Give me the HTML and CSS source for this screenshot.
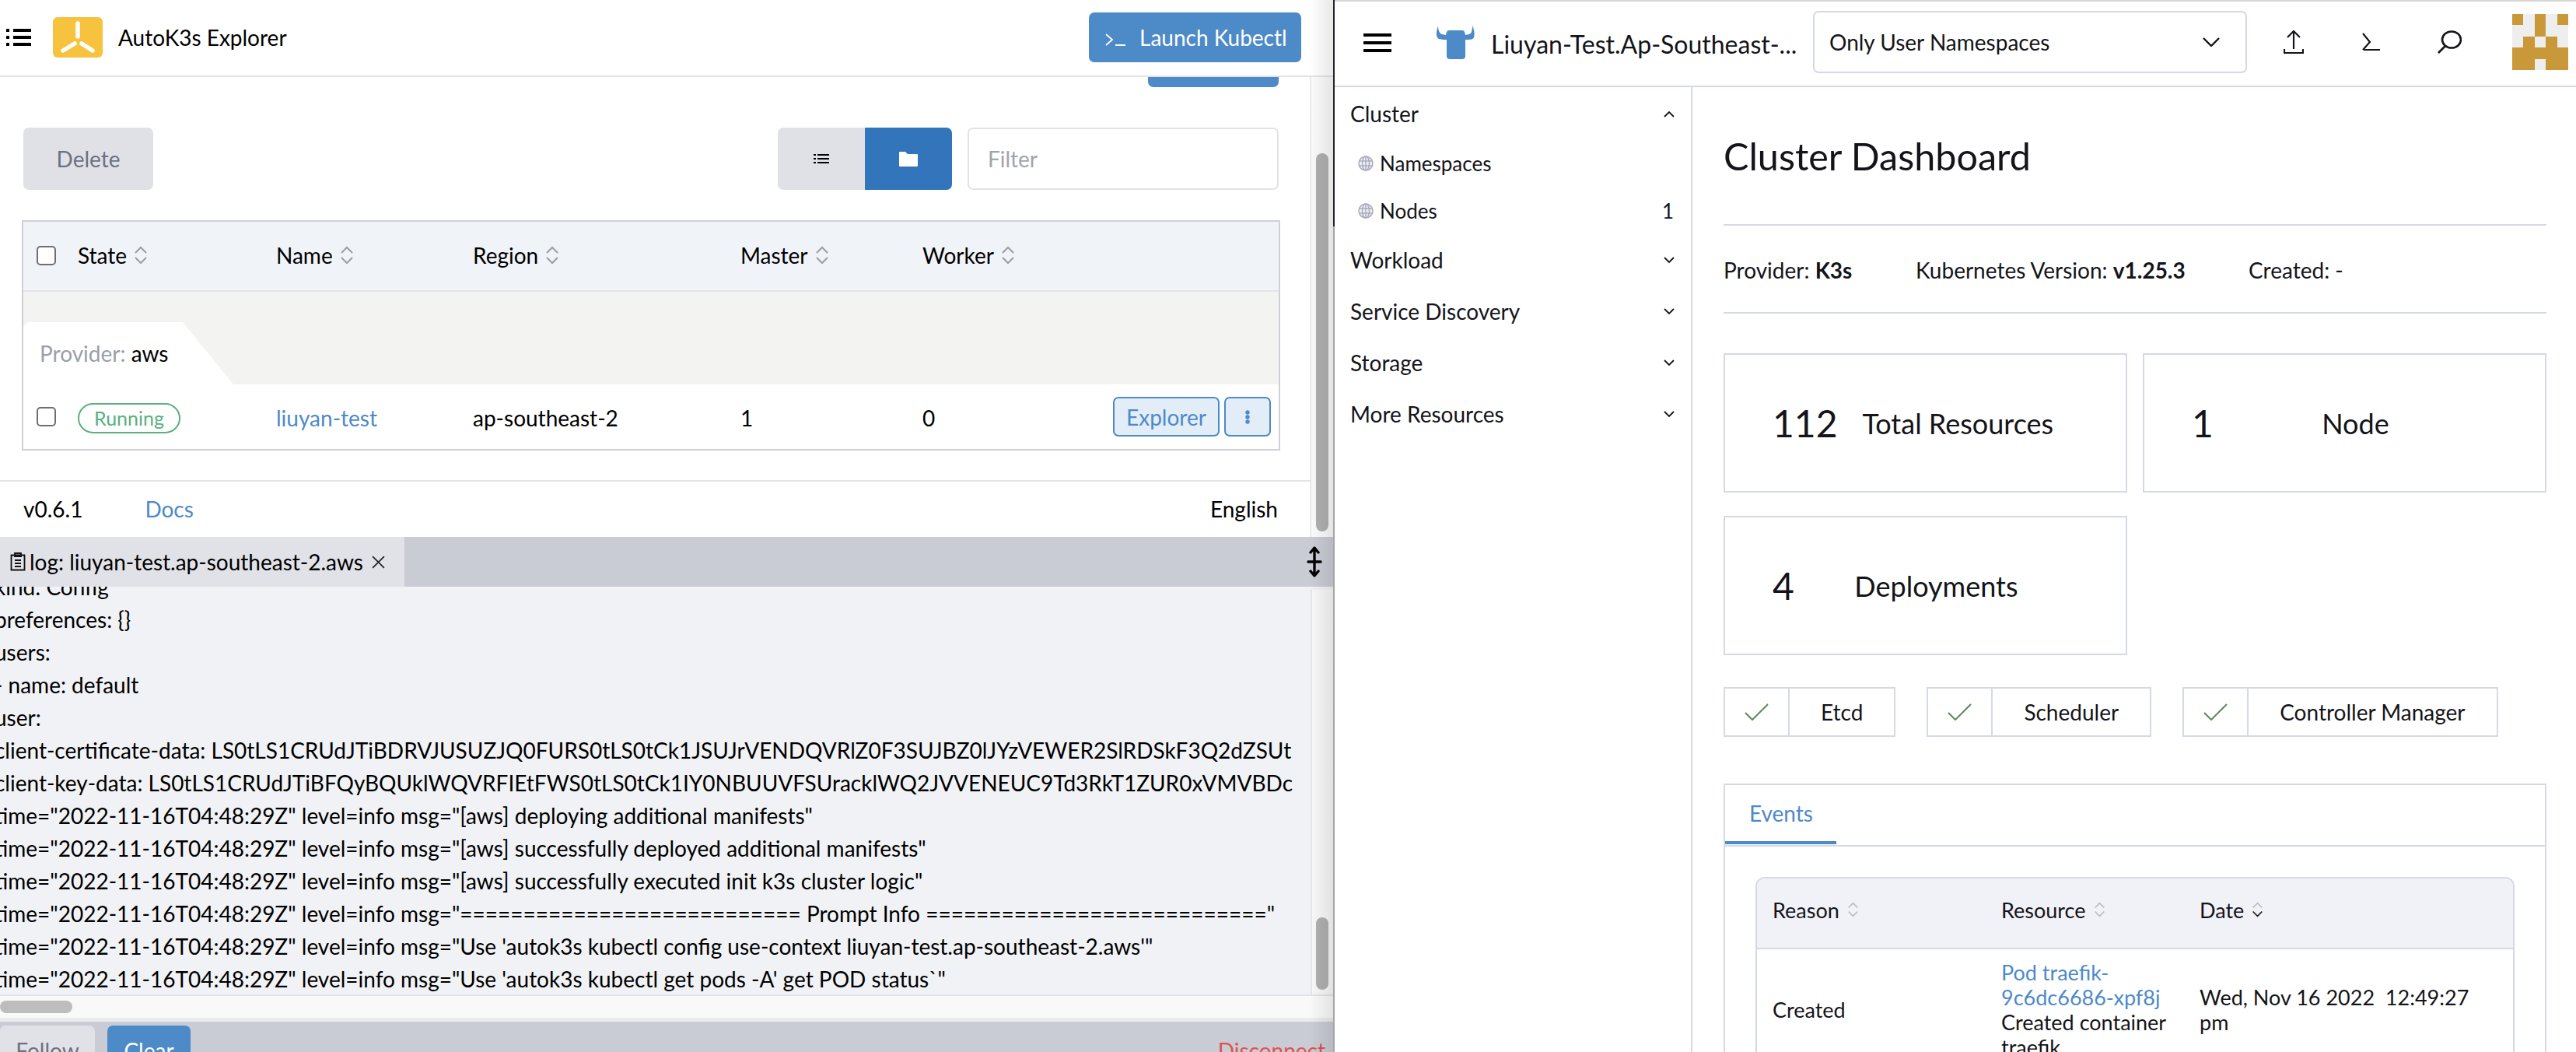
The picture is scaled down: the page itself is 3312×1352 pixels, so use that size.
FILE: index.html
```html
<!DOCTYPE html>
<html lang="en">
<head>
<meta charset="utf-8">
<title>AutoK3s Explorer</title>
<link rel="stylesheet" href="styles.css">
</head>
<body>
<div class="screen">
  <section class="left">
    <header class="app-head">
      <svg class="menu-ico" viewBox="0 0 32 24"><path d="M0 1h4v4H0zM9 1h23v4H9zM0 10h4v4H0zM9 10h23v4H9zM0 19h4v4H0zM9 19h23v4H9z"/></svg>
      <svg class="logo" viewBox="0 0 64 52"><rect width="64" height="52" rx="6" fill="#f7c33f"/><g stroke="#fff" stroke-width="5.5" stroke-linecap="round"><path d="M32 8v17"/><path d="M28 34 13 43"/><path d="M37 34l14 9"/></g></svg>
      <span class="app-title">AutoK3s Explorer</span>
      <button class="launch"><svg viewBox="0 0 26 16"><path d="M1 1l8 7-8 7M13 15h13" fill="none" stroke="#fff" stroke-width="1.8"/></svg>Launch Kubectl</button>
    </header>
    <div class="app-body">
      <div class="app-main">
        <div class="peek"></div>
        <div class="toolbar">
          <button class="btn-delete">Delete</button>
          <div class="toggle">
            <span class="toggle-off"><svg viewBox="0 0 20 14"><path d="M0 1h3v2H0zM5 1h15v2H5zM0 6h3v2H0zM5 6h15v2H5zM0 11h3v2H0zM5 11h15v2H5z"/></svg></span>
            <span class="toggle-on"><svg viewBox="0 0 24 19"><path d="M1 0h7l3 3h12a1 1 0 0 1 1 1v14a1 1 0 0 1-1 1H1a1 1 0 0 1-1-1V1a1 1 0 0 1 1-1z" fill="#fff"/></svg></span>
          </div>
          <div class="filter">Filter</div>
        </div>
        <div class="table">
          <div class="t-row t-head">
            <span class="check"></span>
            <span>State<svg class="sort" viewBox="0 0 18 24"><path d="M2 9l7-7 7 7M2 15l7 7 7-7"/></svg></span>
            <span>Name<svg class="sort" viewBox="0 0 18 24"><path d="M2 9l7-7 7 7M2 15l7 7 7-7"/></svg></span>
            <span>Region<svg class="sort" viewBox="0 0 18 24"><path d="M2 9l7-7 7 7M2 15l7 7 7-7"/></svg></span>
            <span>Master<svg class="sort" viewBox="0 0 18 24"><path d="M2 9l7-7 7 7M2 15l7 7 7-7"/></svg></span>
            <span>Worker<svg class="sort" viewBox="0 0 18 24"><path d="M2 9l7-7 7 7M2 15l7 7 7-7"/></svg></span>
          </div>
          <div class="t-group"><div class="group-tab"><span class="muted">Provider:</span> aws</div></div>
          <div class="t-row t-body">
            <span class="check"></span>
            <span><span class="badge">Running</span></span>
            <a class="link">liuyan-test</a>
            <span>ap-southeast-2</span>
            <span>1</span>
            <span class="worker-cell">0
              <span class="actions"><button class="btn-explorer">Explorer</button><button class="btn-kebab"><svg viewBox="0 0 6 18"><circle cx="3" cy="3" r="2.7"/><circle cx="3" cy="9" r="2.7"/><circle cx="3" cy="15" r="2.7"/></svg></button></span>
            </span>
          </div>
        </div>
        <footer class="app-foot"><span>v0.6.1</span><a class="link docs">Docs</a><span class="lang">English</span></footer>
      </div>
      <div class="v-track"><div class="v-thumb main-thumb"></div></div>
    </div>
    <div class="log-bar">
      <div class="log-tab">
        <svg class="clip-ico" viewBox="0 0 20 24"><path d="M1.5 3.5h17v19h-17zM6 1h8v4H6zM6 10h8M6 14h8M6 18h8" fill="none" stroke="#111" stroke-width="1.8"/></svg>
        <span>log: liuyan-test.ap-southeast-2.aws</span>
        <svg class="close-ico" viewBox="0 0 16 16"><path d="M1 1l14 14M15 1 1 15" stroke="#222" stroke-width="1.6"/></svg>
      </div>
      <svg class="resize-ico" viewBox="0 0 20 40"><path d="M10 3v34M2 20h16M5 8l5-6 5 6M5 32l5 6 5-6" fill="none" stroke="#000" stroke-width="3.4" stroke-linecap="round" stroke-linejoin="round"/></svg>
    </div>
    <div class="log-area">
      <div class="log-text">
        <div>kind: Config</div>
        <div>preferences: {}</div>
        <div>users:</div>
        <div>- name: default</div>
        <div>user:</div>
        <div>client-certificate-data: LS0tLS1CRUdJTiBDRVJUSUZJQ0FURS0tLS0tCk1JSUJrVENDQVRlZ0F3SUJBZ0lJYzVEWER2SlRDSkF3Q2dZSUt</div>
        <div>client-key-data: LS0tLS1CRUdJTiBFQyBQUklWQVRFIEtFWS0tLS0tCk1IY0NBUUVFSUracklWQ2JVVENEUC9Td3RkT1ZUR0xVMVBDc</div>
        <div>time="2022-11-16T04:48:29Z" level=info msg="[aws] deploying additional manifests"</div>
        <div>time="2022-11-16T04:48:29Z" level=info msg="[aws] successfully deployed additional manifests"</div>
        <div>time="2022-11-16T04:48:29Z" level=info msg="[aws] successfully executed init k3s cluster logic"</div>
        <div>time="2022-11-16T04:48:29Z" level=info msg="=========================== Prompt Info ==========================="</div>
        <div>time="2022-11-16T04:48:29Z" level=info msg="Use 'autok3s kubectl config use-context liuyan-test.ap-southeast-2.aws'"</div>
        <div>time="2022-11-16T04:48:29Z" level=info msg="Use 'autok3s kubectl get pods -A' get POD status`"</div>
      </div>
      <div class="log-track"><div class="v-thumb log-thumb"></div></div>
    </div>
    <div class="h-track"><div class="h-thumb"></div></div>
    <div class="log-foot">
      <button class="btn-follow">Follow</button>
      <button class="btn-clear">Clear</button>
      <span class="disconnect">Disconnect</span>
    </div>
    <div class="edge-shade"></div>
  </section>

  <section class="right">
    <header class="dash-head">
      <svg class="burger" viewBox="0 0 36 24"><path d="M0 0h36v4H0zM0 10h36v4H0zM0 20h36v4H0z"/></svg>
      <svg class="bull" viewBox="0 0 50 43"><path d="M3 0C3 6 5 10 8 11l5 1 1-4q1-2 3-2h17q2 0 3 2l1 4 5-1c3-1 4-5 4-11 3 6 3 12 2 15-1 3-5 3-11 3v21q0 4-4 4H18q-4 0-4-4V18C8 18 3 18 2 15 0 12 1 6 3 0z" fill="#4d8ac8"/></svg>
      <span class="dash-title">Liuyan-Test.Ap-Southeast-...</span>
      <div class="ns-select"><span>Only User Namespaces</span><svg viewBox="0 0 22 12"><path d="M1 1l10 10L21 1" fill="none" stroke="#141419" stroke-width="2.4"/></svg></div>
      <svg class="top-ico upload" viewBox="0 0 26 30"><path d="M13 24V1M5 9l8-8 8 8M1 24v5h24v-5" fill="none" stroke="#141419" stroke-width="2.2"/></svg>
      <svg class="top-ico shell" viewBox="0 0 24 24"><path d="M1 1l9 11-9 10M2 22h21" fill="none" stroke="#141419" stroke-width="2.2"/></svg>
      <svg class="top-ico search" viewBox="0 0 32 30"><ellipse cx="19" cy="12" rx="12" ry="10.5" fill="none" stroke="#141419" stroke-width="2.6"/><path d="M11 20 2 29" stroke="#141419" stroke-width="2.6"/></svg>
      <div class="avatar">
        <i class="g"></i><i></i><i class="g"></i><i></i><i class="g"></i>
        <i></i><i></i><i class="g"></i><i></i><i></i>
        <i></i><i class="g"></i><i></i><i class="g"></i><i></i>
        <i class="g"></i><i class="g"></i><i class="g"></i><i class="g"></i><i class="g"></i>
        <i class="g"></i><i class="g"></i><i></i><i class="g"></i><i class="g"></i>
      </div>
    </header>
    <div class="dash-body">
      <nav class="side">
        <div class="side-group"><span>Cluster</span><svg viewBox="0 0 14 9"><path d="M1 8l6-6 6 6"/></svg></div>
        <div class="side-item"><svg class="globe" viewBox="0 0 20 20"><circle cx="10" cy="10" r="9"/><ellipse cx="10" cy="10" rx="4.5" ry="9"/><path d="M1 7h18M1 13h18M10 1v18"/></svg><span>Namespaces</span></div>
        <div class="side-item"><svg class="globe" viewBox="0 0 20 20"><circle cx="10" cy="10" r="9"/><ellipse cx="10" cy="10" rx="4.5" ry="9"/><path d="M1 7h18M1 13h18M10 1v18"/></svg><span>Nodes</span><span class="side-count">1</span></div>
        <div class="side-group"><span>Workload</span><svg viewBox="0 0 14 9"><path d="M1 1l6 6 6-6"/></svg></div>
        <div class="side-group"><span>Service Discovery</span><svg viewBox="0 0 14 9"><path d="M1 1l6 6 6-6"/></svg></div>
        <div class="side-group"><span>Storage</span><svg viewBox="0 0 14 9"><path d="M1 1l6 6 6-6"/></svg></div>
        <div class="side-group"><span>More Resources</span><svg viewBox="0 0 14 9"><path d="M1 1l6 6 6-6"/></svg></div>
      </nav>
      <main class="dash-main">
        <h1 class="dash-h1">Cluster Dashboard</h1>
        <div class="info"><span class="info-a">Provider: <b>K3s</b></span><span class="info-b">Kubernetes Version: <b>v1.25.3</b></span><span>Created: -</span></div>
        <div class="cards">
          <div class="card"><span class="card-n">112</span><span class="card-l">Total Resources</span></div>
          <div class="card"><span class="card-n">1</span><span class="card-l">Node</span></div>
          <div class="card"><span class="card-n">4</span><span class="card-l">Deployments</span></div>
        </div>
        <div class="statuses">
          <div class="status"><span class="status-ico"><svg viewBox="0 0 31 22"><path d="M1 12l9 9L30 1" fill="none" stroke="#5a8a5a" stroke-width="2"/></svg></span><span class="status-l">Etcd</span></div>
          <div class="status"><span class="status-ico"><svg viewBox="0 0 31 22"><path d="M1 12l9 9L30 1" fill="none" stroke="#5a8a5a" stroke-width="2"/></svg></span><span class="status-l">Scheduler</span></div>
          <div class="status"><span class="status-ico"><svg viewBox="0 0 31 22"><path d="M1 12l9 9L30 1" fill="none" stroke="#5a8a5a" stroke-width="2"/></svg></span><span class="status-l">Controller Manager</span></div>
        </div>
        <div class="tabs">
          <div class="tab-head"><span class="tab-active">Events</span></div>
          <div class="tab-body">
            <div class="ev-table">
              <div class="ev-row ev-head">
                <span>Reason<svg class="sort sm" viewBox="0 0 18 24"><path d="M2 9l7-7 7 7M2 15l7 7 7-7"/></svg></span>
                <span>Resource<svg class="sort sm" viewBox="0 0 18 24"><path d="M2 9l7-7 7 7M2 15l7 7 7-7"/></svg></span>
                <span>Date<svg class="sort sm" viewBox="0 0 18 24"><path d="M2 9l7-7 7 7"/><path class="sort-on" d="M2 15l7 7 7-7"/></svg></span>
              </div>
              <div class="ev-row ev-body">
                <span>Created</span>
                <span class="ev-res"><a class="link">Pod traefik-9c6dc6686-xpf8j</a><br>Created container traefik</span>
                <span class="ev-date">Wed, Nov 16 2022&nbsp; 12:49:27 pm</span>
              </div>
            </div>
          </div>
        </div>
      </main>
    </div>
  </section>
</div>
</body>
</html>
```

FILE: styles.css
```css
* { box-sizing: border-box; }
html, body { margin: 0; padding: 0; }
body { font-family: Lato, "Open Sans", sans-serif; font-size: 28px; color: #141419; background: #fff; overflow: hidden; }
button { font: inherit; border: 0; padding: 0; }
svg { display: block; flex: none; }
.screen { display: flex; width: 3312px; height: 1352px; overflow: hidden; }
.link { color: #4d8ac8; }
.muted { color: #9a9faa; }

/* left window */
.left { position: relative; width: 1716px; height: 1352px; flex: none; display: flex; flex-direction: column; border-right: 2px solid; border-image: linear-gradient(to bottom, #23242c 292px, #a6a6a6 292px) 1; overflow: hidden; }
.edge-shade { position: absolute; top: 0; right: 0; bottom: 0; width: 30px; background: linear-gradient(to right, rgba(0,0,0,0), rgba(0,0,0,.09)); pointer-events: none; }
.app-head { height: 97px; flex: none; display: flex; align-items: center; padding: 0 41px 0 8px; background: #fff; position: relative; }
.menu-ico { width: 32px; height: 24px; margin-right: 28px; margin-top: -2px; }
.logo { width: 64px; height: 52px; margin-right: 20px; margin-top: -1px; }
.app-title { color: #000; margin-top: -2px; }
.launch { margin-left: auto; margin-top: -2px; width: 273px; height: 64px; background: #4d8ac8; color: #fff; border-radius: 7px; display: flex; align-items: center; padding-left: 21px; gap: 18px; }
.launch svg { width: 26px; height: 16px; margin-top: 6px; }

.app-body { height: 593px; flex: none; display: flex; border-top: 2px solid #e2e3e8; }
.app-main { flex: 1; min-width: 0; display: flex; flex-direction: column; padding-left: 30px; border-right: 2px solid #e8e8ec; }
.peek { width: 168px; height: 13px; margin-left: 1446px; background: #4d8ac8; border-radius: 0 0 7px 7px; flex: none; }
.toolbar { display: flex; align-items: stretch; height: 80px; margin-top: 52px; flex: none; width: 1614px; }
.btn-delete { width: 167px; background: #e0e1e7; color: #6c7180; border-radius: 7px; }
.toggle { display: flex; margin-left: auto; border-radius: 7px; overflow: hidden; }
.toggle-off, .toggle-on { width: 112px; display: flex; align-items: center; justify-content: center; }
.toggle-off { background: #e0e1e7; }
.toggle-off svg { width: 20px; height: 14px; }
.toggle-on { background: #3275bb; }
.toggle-on svg { width: 24px; height: 19px; }
.filter { width: 400px; margin-left: 20px; border: 2px solid #e2e3e8; border-radius: 7px; color: #a0a4ad; display: flex; align-items: center; padding-left: 24px; background: #fff; }

.table { width: 1618px; margin: 39px 0 0 -2px; border: 2px solid #cfd0d5; flex: none; }
.t-row { display: grid; grid-template-columns: 70px 255px 253px 344px 234px 1fr; align-items: center; color: #000; }
.t-row > * { display: flex; align-items: center; }
.check { width: 25px; height: 25px; margin-left: 17px; border: 2px solid #6e6f76; border-radius: 5px; background: #fff; }
.t-head { height: 90px; padding-bottom: 2px; background: #f0f3f8; border-bottom: 2px solid #e2e4ea; }
.sort { width: 18px; height: 24px; margin-left: 9px; fill: none; stroke: #9b9da3; stroke-width: 2; }
.sort.sm { width: 15px; height: 22px; margin-left: 10px; stroke: #b9bbc2; }
.sort-on { stroke: #141419; }
.t-group { height: 119px; background: #f3f3f1; padding-top: 39px; }
.group-tab { width: 270px; height: 80px; background: #fff; padding: 20px 0 0 21px; line-height: 40px; color: #000; clip-path: polygon(0 6px, 6px 0, 205px 0, 270px 80px, 0 80px); }
.t-body { height: 83px; padding-top: 3px; }
.t-body .check { margin-bottom: 3px; }
.badge { display: flex; align-items: center; justify-content: center; width: 132px; height: 39px; border: 2px solid #5ab07f; border-radius: 20px; color: #5ab07f; font-size: 25px; }
.worker-cell { justify-content: space-between; }
.actions { display: flex; gap: 6px; margin: 0 10px 3px 0; }
.btn-explorer, .btn-kebab { height: 51px; background: #e3edf7; border: 2px solid #4d8ac8; border-radius: 7px; color: #4d8ac8; }
.btn-explorer { width: 137px; }
.btn-kebab { width: 60px; display: flex; align-items: center; justify-content: center; }
.btn-kebab svg { width: 6px; height: 18px; fill: #4d8ac8; }

.app-foot { margin: 38px 0 0 -30px; padding-left: 30px; border-top: 2px solid #e2e3e8; height: 71px; display: flex; align-items: center; flex: none; color: #000; }
.docs { margin-left: 80px; }
.lang { margin-left: auto; margin-right: 41px; }

.v-track { width: 28px; flex: none; padding: 98px 0 0 6px; background: #fbfbfb; }
.v-thumb { width: 16px; background: #b0b0b0; border-radius: 8px; }
.main-thumb { height: 486px; }

.log-bar { height: 64px; flex: none; background: #c9ccd5; display: flex; align-items: stretch; position: relative; padding-right: 14px; }
.log-tab { width: 520px; background: #e0e2e8; display: flex; align-items: center; padding-left: 13px; color: #000; }
.clip-ico { width: 20px; height: 24px; margin-right: 5px; }
.close-ico { width: 17px; height: 17px; margin-left: 11px; }
.resize-ico { width: 20px; height: 40px; margin: 12px 0 0 auto; }

.log-area { height: 526px; flex: none; display: flex; background: #f0f2f5; border-bottom: 2px solid #e2e3e8; }
.log-text { flex: 1; min-width: 0; overflow: hidden; white-space: nowrap; line-height: 42px; color: #000; text-indent: -7px; }
.log-text div:first-child { margin-top: -21px; }
.log-track { width: 29px; flex: none; margin-top: 4px; background: #f8f8f8; border-left: 2px solid #e6e7ea; padding: 421px 0 0 5px; }
.log-thumb { height: 93px; }
.h-track { height: 33px; flex: none; background: #f9f9f9; padding-top: 6px; border-bottom: 5px solid #ebebeb; }
.h-thumb { width: 93px; height: 16px; background: #bdbdbd; border-radius: 8px; }
.log-foot { flex: 1; background: #c9ccd5; display: flex; align-items: flex-start; padding-top: 5px; }
.btn-follow { width: 122px; height: 64px; background: #e0e2e8; color: #6c7180; border-radius: 7px; }
.btn-clear { width: 107px; height: 64px; margin-left: 16px; background: #4d8ac8; color: #fff; border-radius: 7px; }
.disconnect { margin-left: auto; margin-right: 10px; color: #e0534f; line-height: 64px; }

/* right window */
.right { flex: 1; min-width: 0; display: flex; flex-direction: column; height: 1352px; border-top: 2px solid #d6d6d6; }
.dash-head { height: 110px; flex: none; display: flex; align-items: center; border-bottom: 2px solid #d5d9e6; padding-right: 10px; }
.burger { width: 36px; height: 24px; margin-left: 37px; margin-top: -2px; }
.bull { width: 50px; height: 43px; margin-left: 57px; margin-top: -4px; }
.dash-title { margin-left: 21px; width: 414px; white-space: nowrap; font-size: 32px; }
.ns-select { width: 558px; height: 80px; margin-top: -4px; border: 2px solid #d5d9e6; border-radius: 7px; display: flex; align-items: center; justify-content: space-between; padding: 0 33px 0 19px; }
.ns-select svg { width: 22px; height: 12px; }
.top-ico { margin-top: -4px; }
.upload { width: 26px; height: 30px; margin-left: 47px; }
.shell { width: 24px; height: 24px; margin-left: 75px; }
.search { width: 32px; height: 30px; margin-left: 72px; }
.avatar { width: 72px; height: 72px; margin-left: auto; margin-top: -4px; display: grid; grid-template-columns: repeat(5, 1fr); grid-auto-rows: 1fr; background: #eeeeee; }
.avatar .g { background: #c99839; }

.dash-body { flex: 1; min-height: 0; display: flex; }
.side { width: 460px; flex: none; border-right: 2px solid #d5d9e6; padding-top: 1px; }
.side-group { height: 66px; display: flex; align-items: center; justify-content: space-between; padding: 0 21px 0 20px; }
.side-group svg { width: 14px; height: 9px; fill: none; stroke: #141419; stroke-width: 1.8; }
.side-item { height: 61px; display: flex; align-items: center; padding: 0 22px 0 30px; font-size: 26px; }
.globe { width: 20px; height: 20px; margin-right: 8px; fill: #eef0f4; stroke: #a9acbe; stroke-width: 1.5; }
.side-count { margin-left: auto; }

.dash-main { flex: 1; min-width: 0; padding: 0 38px 0 40px; overflow: hidden; }
.dash-h1 { margin: 0; height: 178px; display: flex; align-items: center; border-bottom: 2px solid #d5d9e6; font-size: 48.5px; font-weight: 400; }
.info { height: 113px; padding-top: 2px; display: flex; align-items: center; border-bottom: 2px solid #d5d9e6; }
.info-a { width: 247px; }
.info-b { width: 428px; }
.cards { display: grid; grid-template-columns: 519px 519px; gap: 30px 20px; margin-top: 51px; }
.card { height: 179px; border: 2px solid #d5d9e6; display: flex; align-items: center; padding: 0 61px; }
.card-n { font-size: 48px; }
.card-l { flex: 1; text-align: center; font-size: 36px; }
.statuses { display: flex; gap: 40px; margin-top: 41px; }
.status { height: 64px; display: flex; border: 2px solid #d5d9e6; }
.status-ico { width: 83px; border-right: 2px solid #d5d9e6; display: flex; align-items: center; justify-content: center; }
.status-ico svg { width: 31px; height: 22px; }
.status-l { padding: 0 40px; display: flex; align-items: center; }
.tabs { margin-top: 60px; border: 2px solid #d5d9e6; border-bottom: 0; height: 400px; }
.tab-head { height: 79px; border-bottom: 2px solid #d5d9e6; display: flex; }
.tab-active { width: 143px; height: 76px; padding-left: 31px; line-height: 72px; color: #4d8ac8; border-bottom: 4px solid #4d8ac8; }
.tab-body { padding: 39px 39px 0; }
.ev-table { border: 2px solid #d5d9e6; border-bottom: 0; border-radius: 12px 12px 0 0; height: 400px; overflow: hidden; }
.ev-row { display: grid; grid-template-columns: 294px 255px 1fr; padding-left: 20px; font-size: 27px; }
.ev-head { height: 91px; background: #f1f2f8; border-bottom: 2px solid #d5d9e6; align-items: center; padding-bottom: 9px; }
.ev-head > span { display: flex; align-items: center; }
.ev-body { line-height: 32px; align-items: center; padding-top: 14px; }
.ev-res { width: 230px; }
.ev-date { width: 370px; }
```
